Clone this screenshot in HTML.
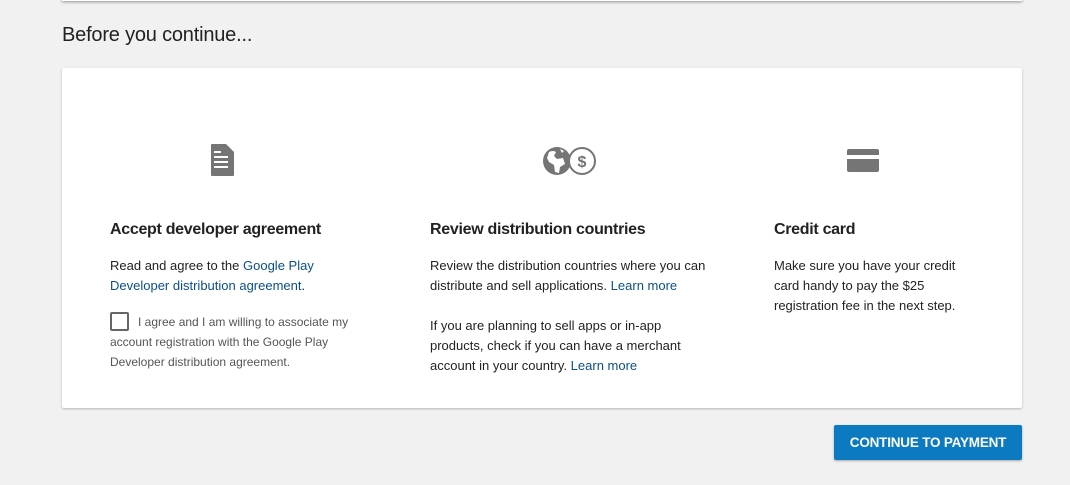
<!DOCTYPE html>
<html><head><style>
body{margin:0;width:1070px;height:485px;background:#f1f1f1;font-family:"Liberation Sans",sans-serif;position:relative;overflow:hidden;color:#222}
.top{position:absolute;left:62px;top:-10px;width:960px;height:11px;background:#fff;box-shadow:0 1px 3px rgba(0,0,0,.4)}
h1{position:absolute;left:62px;top:24px;margin:0;font-size:20px;font-weight:normal;color:#222;letter-spacing:-0.2px}
.card{position:absolute;left:62px;top:68px;width:960px;height:340px;background:#fff;border-radius:2px;box-shadow:0 1px 2px rgba(0,0,0,.25)}
.col{position:absolute;top:0}
.t{position:absolute;top:153px;font-size:16px;font-weight:bold;color:#222;white-space:nowrap;letter-spacing:-0.3px}
.b{position:absolute;top:188px;font-size:13px;line-height:20px;color:#222;width:290px}
a{color:#0b4f8a;text-decoration:none}
.cb{position:absolute;left:0;top:244px;width:15px;height:15px;border:2px solid #666;border-radius:2px}
.ct{position:absolute;top:244px;left:0;font-size:12px;line-height:20px;color:#555;width:250px;text-indent:28px}
.btn{position:absolute;left:834px;top:425px;width:188px;height:35px;background:#0b7ac0;color:#fff;font-size:13.5px;font-weight:bold;text-align:center;line-height:35px;border-radius:2px;box-shadow:0 1px 2px rgba(0,0,0,.3);letter-spacing:-0.2px}
</style></head><body>
<div class="top"></div>
<h1>Before you continue...</h1>
<div class="card">
 <div class="col" style="left:48px">
  <svg style="position:absolute;left:101px;top:76px" width="23" height="32" viewBox="0 0 23 32"><path d="M1 0H15L23 8V31Q23 32 22 32H1Q0 32 0 31V1Q0 0 1 0Z" fill="#757575"/><rect x="3" y="7" width="7" height="2" fill="#fff"/><rect x="3" y="12" width="14" height="2" fill="#fff"/><rect x="3" y="17" width="14" height="2" fill="#fff"/><rect x="3" y="22" width="14" height="2" fill="#fff"/></svg>
  <div class="t">Accept developer agreement</div>
  <div class="b" style="width:215px">Read and agree to the <a>Google Play Developer distribution agreement</a>.</div>
  <div class="cb"></div>
  <div class="ct">I agree and I am willing to associate my account registration with the Google Play Developer distribution agreement.</div>
 </div>
 <div class="col" style="left:368px">
  <svg style="position:absolute;left:113px;top:77px" width="54" height="32" viewBox="0 0 54 32"><circle cx="14" cy="16" r="14" fill="#757575"/><path d="M6 7Q10 5 13 7L11 11 14 14 20 13 22 19 17 22 16 28 12 27 11 20 6 17 4 13Z M17 4L21 6 19 8Z" fill="#fff"/><circle cx="39" cy="16" r="13" fill="#fff" stroke="#757575" stroke-width="2"/><text x="39" y="22" font-size="16" font-weight="bold" fill="#757575" text-anchor="middle" font-family="Liberation Sans">$</text></svg>
  <div class="t">Review distribution countries</div>
  <div class="b" style="width:280px">Review the distribution countries where you can distribute and sell applications. <a>Learn more</a><br><br>If you are planning to sell apps or in-app products, check if you can have a merchant account in your country. <a>Learn more</a></div>
 </div>
 <div class="col" style="left:712px">
  <svg style="position:absolute;left:73px;top:81px" width="32" height="23" viewBox="0 0 32 23"><rect width="32" height="23" rx="2" fill="#757575"/><rect y="6" width="32" height="4" fill="#fff"/></svg>
  <div class="t">Credit card</div>
  <div class="b" style="width:195px">Make sure you have your credit card handy to pay the $25 registration fee in the next step.</div>
 </div>
</div>
<div class="btn">CONTINUE TO PAYMENT</div>
</body></html>
